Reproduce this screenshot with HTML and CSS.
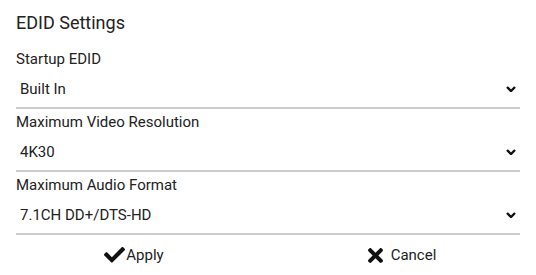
FILE: index.html
```html
<!DOCTYPE html>
<html>
<head>
<meta charset="utf-8">
<link rel="stylesheet" href="styles.css">
</head>
<body>
<div class="panel">
  <div class="content">
    <h2 class="title">EDID Settings</h2>
    <div class="field">
      <div class="label">Startup EDID</div>
      <div class="select"><span>Built In</span><svg class="chev" viewBox="0 0 10 6"><polyline points="1,1 5,5 9,1"/></svg></div>
    </div>
    <div class="field">
      <div class="label">Maximum Video Resolution</div>
      <div class="select"><span>4K30</span><svg class="chev" viewBox="0 0 10 6"><polyline points="1,1 5,5 9,1"/></svg></div>
    </div>
    <div class="field">
      <div class="label">Maximum Audio Format</div>
      <div class="select"><span>7.1CH DD+/DTS-HD</span><svg class="chev" viewBox="0 0 10 6"><polyline points="1,1 5,5 9,1"/></svg></div>
    </div>
  </div>
  <div class="actions">
    <button class="btn apply"><svg class="ico-check" viewBox="0 65 512 384"><path d="M173.898 439.404l-166.4-166.4c-9.997-9.997-9.997-26.206 0-36.204l36.203-36.204c9.997-9.998 26.207-9.998 36.204 0L192 312.69 432.095 72.596c9.997-9.997 26.207-9.997 36.204 0l36.203 36.204c9.997 9.997 9.997 26.206 0 36.204l-294.4 294.401c-9.998 9.997-26.207 9.997-36.204-.001z"/></svg><span>Apply</span></button>
    <button class="btn cancel"><svg class="ico-x" viewBox="0 80 352 352"><path d="M242.72 256l100.070-100.070c12.280-12.280 12.280-32.190 0-44.480l-22.240-22.240c-12.280-12.280-32.190-12.280-44.480 0L176 189.280 75.930 89.210c-12.280-12.280-32.190-12.280-44.480 0L9.210 111.450c-12.280 12.280-12.280 32.190 0 44.480L109.280 256 9.210 356.070c-12.280 12.280-12.280 32.190 0 44.480l22.240 22.240c12.280 12.280 32.200 12.280 44.480 0L176 322.720l100.070 100.070c12.280 12.280 32.200 12.280 44.480 0l22.240-22.240c12.280-12.280 12.280-32.190 0-44.480L242.720 256z"/></svg><span>Cancel</span></button>
  </div>
</div>
</body>
</html>
```
FILE: styles.css
```css
html, body {
  margin: 0;
  padding: 0;
  background: #fff;
}
body {
  font-family: Roboto, "Liberation Sans", sans-serif;
  color: #222;
  width: 536px;
  height: 275px;
  overflow: hidden;
}
.content {
  padding: 0 16px;
}
.title {
  margin: 13px 0 13px;
  font-size: 18px;
  line-height: 20px;
  font-weight: 400;
  color: #222;
}
.field {
  padding-top: 3px;
}
.label {
  font-size: 15px;
  line-height: 20px;
}
.select {
  height: 36px;
  padding-top: 2px;
  padding-left: 4px;
  padding-right: 4px;
  display: flex;
  align-items: center;
  justify-content: space-between;
  font-size: 15px;
  border-bottom: 2px solid #cccccc;
}
.chev {
  width: 10px;
  height: 6px;
  fill: none;
  stroke: #111;
  stroke-width: 2.4;
  stroke-linecap: butt;
}
.actions {
  display: grid;
  grid-template-columns: 1fr 1fr;
  height: 40px;
}
.btn {
  border: 0;
  background: transparent;
  font-family: Roboto, "Liberation Sans", sans-serif;
  font-size: 15px;
  color: #222;
  display: flex;
  align-items: center;
  justify-content: center;
  padding: 0;
}
.ico-check {
  width: 21px;
  height: 15.75px;
  fill: #111;
  margin-right: 1px;
}
.ico-x {
  width: 15px;
  height: 15px;
  fill: #111;
  margin-right: 8px;
}
```
